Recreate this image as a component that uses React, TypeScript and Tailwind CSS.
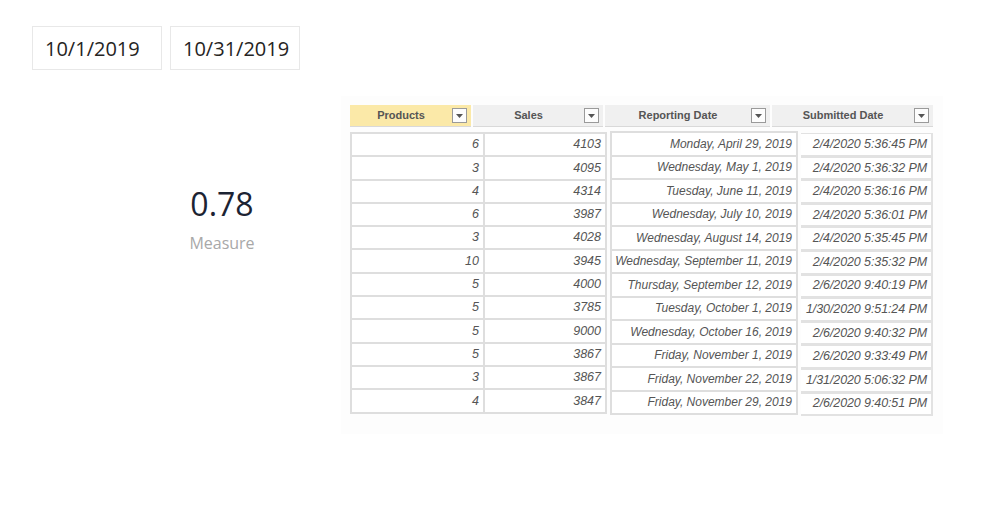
import React from "react";

const rows = [
  { p: 6, s: 4103, r: "Monday, April 29, 2019", d: "2/4/2020 5:36:45 PM" },
  { p: 3, s: 4095, r: "Wednesday, May 1, 2019", d: "2/4/2020 5:36:32 PM" },
  { p: 4, s: 4314, r: "Tuesday, June 11, 2019", d: "2/4/2020 5:36:16 PM" },
  { p: 6, s: 3987, r: "Wednesday, July 10, 2019", d: "2/4/2020 5:36:01 PM" },
  { p: 3, s: 4028, r: "Wednesday, August 14, 2019", d: "2/4/2020 5:35:45 PM" },
  { p: 10, s: 3945, r: "Wednesday, September 11, 2019", d: "2/4/2020 5:35:32 PM" },
  { p: 5, s: 4000, r: "Thursday, September 12, 2019", d: "2/6/2020 9:40:19 PM" },
  { p: 5, s: 3785, r: "Tuesday, October 1, 2019", d: "1/30/2020 9:51:24 PM" },
  { p: 5, s: 9000, r: "Wednesday, October 16, 2019", d: "2/6/2020 9:40:32 PM" },
  { p: 5, s: 3867, r: "Friday, November 1, 2019", d: "2/6/2020 9:33:49 PM" },
  { p: 3, s: 3867, r: "Friday, November 22, 2019", d: "1/31/2020 5:06:32 PM" },
  { p: 4, s: 3847, r: "Friday, November 29, 2019", d: "2/6/2020 9:40:51 PM" },
];

export default function App() {
  return (
    <div
      className="relative h-[506px] w-[992px] overflow-hidden bg-white"
      style={{ fontFamily: '"Open Sans", "Noto Sans", sans-serif' }}
    >
      {/* Date slicers */}
      <div className="ml-[32px] mt-[26px] flex gap-[8px]">
        <DateBox value="10/1/2019" />
        <DateBox value="10/31/2019" />
      </div>

      <div className="mt-[26px] flex">
        {/* Card */}
        <div className="ml-[150px] flex w-[144px] flex-col items-center pt-[88px]">
          <span className="text-[32px] leading-[40px] text-[#1c2333]">0.78</span>
          <span className="mt-[8px] text-[16px] leading-[22px] text-[#a8a8a8]">Measure</span>
        </div>

        {/* Table picture */}
        <div
          className="ml-[47px] h-[338px] w-[602px] bg-[#fdfdfd] pl-[9px] pt-[9px]"
          style={{ fontFamily: '"Liberation Sans", Arial, sans-serif' }}
        >
          <div className="flex gap-[2px]">
            <HeaderCell label="Products" width={121} active />
            <HeaderCell label="Sales" width={130} />
            <HeaderCell label="Reporting Date" width={165} />
            <HeaderCell label="Submitted Date" width={161} />
          </div>

          <div className="mt-[5px] flex items-start">
            <div className="border-l-2 border-t-2 border-[#dedede] bg-white">
              {rows.map((row, i) => (
                <div key={i} className="flex h-[23.3px] border-b-2 border-[#dedede]">
                  <Cell width={133}>{row.p}</Cell>
                  <Cell width={122}>{row.s}</Cell>
                </div>
              ))}
            </div>
            <div className="ml-[3px] mt-[-1px] border-l-2 border-t-2 border-[#dedede] bg-white">
              {rows.map((row, i) => (
                <div key={i} className="flex h-[23.5px] border-b-2 border-[#dedede]">
                  <div className="flex w-[186px] items-center justify-end border-r-2 border-[#dedede] pr-[4px] text-[12px] italic text-[#555555]">
                    {row.r}
                  </div>
                </div>
              ))}
            </div>
            <div className="ml-[3px] mt-[1px] bg-white">
              {rows.map((row, i) => (
                <div key={i} className="flex h-[23.6px] border-b-2 border-t border-[#e2e2e2]">
                  <div className="flex w-[132px] items-center justify-end border-r-2 border-[#e2e2e2] pr-[4px] text-[12.5px] italic tracking-[-0.1px] text-[#555555]">
                    {row.d}
                  </div>
                </div>
              ))}
            </div>
          </div>
        </div>
      </div>
    </div>
  );
}

function DateBox({ value }: { value: string }) {
  return (
    <div className="flex h-[44px] w-[130px] items-center border border-[#e8e8e8] pl-[12px] pt-[2px] text-[20px] text-[#252423]">
      {value}
    </div>
  );
}

function HeaderCell({ label, width, active }: { label: string; width: number; active?: boolean }) {
  return (
    <div
      className={
        "flex h-[22px] items-center border-b border-[#d9d9d9] " +
        (active ? "bg-[#fbe9a8]" : "bg-[#f0f0f0]")
      }
      style={{ width }}
    >
      <span className="flex-1 text-center text-[11px] font-bold text-[#555555]">{label}</span>
      <div className="mr-[4px] flex h-[15px] w-[15px] items-center justify-center border border-[#9a9a9a] bg-[#fdfdfd]">
        <svg width="7" height="4" viewBox="0 0 7 4">
          <path d="M0 0h7L3.5 4z" fill="#555" />
        </svg>
      </div>
    </div>
  );
}

function Cell({ width, children }: { width: number; children: React.ReactNode }) {
  return (
    <div
      className="flex items-center justify-end border-r-2 border-[#dedede] pr-[4px] text-[12.5px] italic text-[#555555]"
      style={{ width }}
    >
      {children}
    </div>
  );
}
